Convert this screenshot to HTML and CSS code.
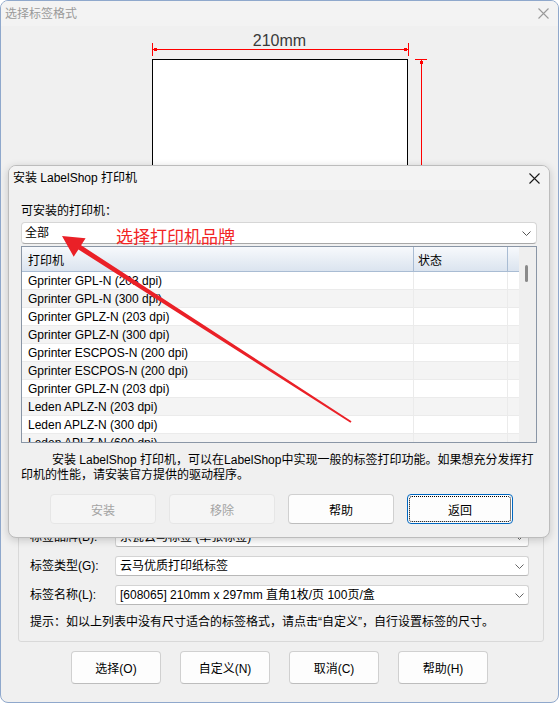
FILE: index.html
```html
<!DOCTYPE html>
<html lang="zh-CN">
<head>
<meta charset="utf-8">
<title>选择标签格式</title>
<link rel="stylesheet" href="styles.css">
</head>
<body>
<div class="win">
  <div class="titlebar">
    <span class="title inactive">选择标签格式</span>
    <svg class="xbtn" width="11" height="11" viewBox="0 0 11 11"><path d="M0.5 0.5L10.5 10.5M10.5 0.5L0.5 10.5" stroke="#9a9a9a" stroke-width="1.1" fill="none"/></svg>
  </div>
  <div class="preview">
    <svg width="557" height="493" viewBox="1 26 557 493">
      <text x="279.5" y="46" text-anchor="middle" class="dimtext">210mm</text>
      <line x1="152" y1="49.5" x2="409" y2="49.5" stroke="#ff0000" stroke-width="1"/>
      <line x1="152.5" y1="43" x2="152.5" y2="56" stroke="#ff0000" stroke-width="1"/>
      <line x1="408.5" y1="43" x2="408.5" y2="56" stroke="#ff0000" stroke-width="1"/>
      <rect x="154" y="48" width="3" height="3" fill="#ff0000"/>
      <rect x="404" y="48" width="3" height="3" fill="#ff0000"/>
      <rect x="152.5" y="59.5" width="255" height="600" fill="#ffffff" stroke="#000000" stroke-width="1"/>
      <line x1="415" y1="59.5" x2="427" y2="59.5" stroke="#ff0000" stroke-width="1"/>
      <line x1="421.5" y1="59" x2="421.5" y2="519" stroke="#ff0000" stroke-width="1"/>
      <rect x="420" y="61" width="3" height="3" fill="#ff0000"/>
    </svg>
  </div>
  <div class="group">
    <div class="row"><span class="lbl">标签品牌(B):</span><div class="combo">京瓷云马标签 (单张标签)<svg class="chev" width="9" height="5" viewBox="0 0 9 5"><polyline points="0.5,0.5 4.5,4.5 8.5,0.5" fill="none" stroke="#666" stroke-width="1"/></svg></div></div>
    <div class="row"><span class="lbl">标签类型(G):</span><div class="combo">云马优质打印纸标签<svg class="chev" width="9" height="5" viewBox="0 0 9 5"><polyline points="0.5,0.5 4.5,4.5 8.5,0.5" fill="none" stroke="#666" stroke-width="1"/></svg></div></div>
    <div class="row"><span class="lbl">标签名称(L):</span><div class="combo">[608065] 210mm x 297mm 直角1枚/页 100页/盒<svg class="chev" width="9" height="5" viewBox="0 0 9 5"><polyline points="0.5,0.5 4.5,4.5 8.5,0.5" fill="none" stroke="#666" stroke-width="1"/></svg></div></div>
    <div class="hint">提示：如以上列表中没有尺寸适合的标签格式，请点击“自定义”，自行设置标签的尺寸。</div>
  </div>
  <div class="btns">
    <button class="btn">选择(O)</button>
    <button class="btn">自定义(N)</button>
    <button class="btn">取消(C)</button>
    <button class="btn">帮助(H)</button>
  </div>
</div>

<div class="dlg">
  <div class="dtitlebar">
    <span class="title">安装 LabelShop 打印机</span>
    <svg class="dxbtn" width="11" height="11" viewBox="0 0 11 11"><path d="M0.5 0.5L10.5 10.5M10.5 0.5L0.5 10.5" stroke="#1a1a1a" stroke-width="1.1" fill="none"/></svg>
  </div>
  <div class="dbody">
    <div class="dlabel">可安装的打印机：</div>
    <div class="dcombo">全部<svg class="chev" width="9" height="5" viewBox="0 0 9 5"><polyline points="0.5,0.5 4.5,4.5 8.5,0.5" fill="none" stroke="#555" stroke-width="1"/></svg></div>
    <div class="list">
      <div class="grid">
        <div class="lhead">
          <div class="c1">打印机</div><div class="c2">状态</div><div class="c3"></div>
        </div>
        <div class="lrow"><div class="c1">Gprinter GPL-N (203 dpi)</div><div class="c2"></div><div class="c3"></div></div>
        <div class="lrow alt"><div class="c1">Gprinter GPL-N (300 dpi)</div><div class="c2"></div><div class="c3"></div></div>
        <div class="lrow"><div class="c1">Gprinter GPLZ-N (203 dpi)</div><div class="c2"></div><div class="c3"></div></div>
        <div class="lrow alt"><div class="c1">Gprinter GPLZ-N (300 dpi)</div><div class="c2"></div><div class="c3"></div></div>
        <div class="lrow"><div class="c1">Gprinter ESCPOS-N (200 dpi)</div><div class="c2"></div><div class="c3"></div></div>
        <div class="lrow alt"><div class="c1">Gprinter ESCPOS-N (200 dpi)</div><div class="c2"></div><div class="c3"></div></div>
        <div class="lrow"><div class="c1">Gprinter GPLZ-N (203 dpi)</div><div class="c2"></div><div class="c3"></div></div>
        <div class="lrow alt"><div class="c1">Leden APLZ-N (203 dpi)</div><div class="c2"></div><div class="c3"></div></div>
        <div class="lrow"><div class="c1">Leden APLZ-N (300 dpi)</div><div class="c2"></div><div class="c3"></div></div>
        <div class="lrow alt"><div class="c1">Leden APLZ-N (600 dpi)</div><div class="c2"></div><div class="c3"></div></div>
      </div>
      <div class="sb"><div class="thumb"></div></div>
    </div>
    <p class="desc">安装 LabelShop 打印机，可以在LabelShop中实现一般的标签打印功能。如果想充分发挥打<br>印机的性能，请安装官方提供的驱动程序。</p>
    <div class="dbtns">
      <button class="dbtn disabled">安装</button>
      <button class="dbtn disabled">移除</button>
      <button class="dbtn">帮助</button>
      <button class="dbtn focus">返回</button>
    </div>
  </div>
</div>

<svg class="arrow" width="559" height="703" viewBox="0 0 559 703">
  <polygon points="62,236 85.6,238.2 81.1,245.3 351.5,421.2 350.5,422.8 78.4,249.5 73.7,256.7" fill="#ea2027"/>
</svg>
<div class="note">选择打印机品牌</div>
</body>
</html>
```

FILE: styles.css
```css
* { box-sizing: border-box; }
html, body { margin: 0; padding: 0; }
body {
  width: 559px;
  height: 703px;
  position: relative;
  overflow: hidden;
  background: #ffffff;
  font-family: "Liberation Sans", "Noto Sans CJK SC", sans-serif;
  font-size: 12px;
  color: #000;
}

.win {
  width: 559px;
  height: 703px;
  border: 1px solid #8fa8cc;
  border-radius: 8px;
  background: #f0f0f0;
  display: flex;
  flex-direction: column;
  overflow: hidden;
}

.titlebar {
  height: 25px;
  flex: none;
  background: #f3f3f3;
  display: flex;
  align-items: center;
  padding-left: 4px;
  padding-right: 9px;
}
.title { flex: 1; line-height: 16px; }
.title.inactive { color: #9a9a9a; }
.xbtn, .dxbtn { flex: none; }

.preview { height: 493px; flex: none; }
.preview svg { display: block; }
.dimtext {
  font-family: "Liberation Sans", sans-serif;
  font-size: 16px;
  fill: #3a3a3a;
}

.group {
  margin: 0 14px 0 17px;
  border: 1px solid #d9d9d9;
  border-radius: 3px;
  padding: 7px 14px 11px 11px;
  display: flex;
  flex-direction: column;
  gap: 9px;
}
.row { display: flex; align-items: center; height: 20px; }
.lbl { width: 85px; flex: none; line-height: 16px; }
.combo {
  flex: 1;
  height: 20px;
  background: #fff;
  border: 1px solid #d4d4d4;
  border-bottom-color: #b8b8b8;
  border-radius: 3px;
  display: flex;
  align-items: center;
  padding-left: 4px;
  padding-right: 4px;
  line-height: 16px;
  white-space: nowrap;
}
.chev { margin-left: auto; flex: none; }
.hint { line-height: 16px; height: 16px; white-space: nowrap; }

.btns {
  margin-top: 9px;
  display: flex;
  justify-content: center;
  gap: 19px;
}
.btn, .dbtn {
  font: inherit;
  color: #000;
  background: #fdfdfd;
  border: 1px solid #d0d0d0;
  border-bottom-color: #bdbdbd;
  border-radius: 4px;
  padding: 0;
  margin: 0;
}
.btn { width: 90px; height: 33px; }

/* front dialog */
.dlg {
  position: absolute;
  left: 8px;
  top: 165px;
  width: 542px;
  height: 373px;
  background: #f0f0f0;
  border: 1px solid #bcbcbc;
  border-radius: 8px;
  box-shadow: 0 2px 8px rgba(0,0,0,0.18);
  overflow: hidden;
}
.dtitlebar {
  height: 24px;
  background: #f3f3f3;
  display: flex;
  align-items: center;
  padding-left: 4px;
  padding-right: 9px;
}
.dbody { padding: 0 12px 0 12px; }
.dlabel { margin-top: 13px; line-height: 16px; height: 16px; }
.dcombo {
  margin-top: 3px;
  height: 22px;
  width: 516px;
  background: #fff;
  border: 1px solid #d6d6d6;
  border-bottom-color: #a8a8a8;
  border-radius: 4px;
  display: flex;
  align-items: center;
  padding-left: 3px;
  padding-right: 5px;
  line-height: 16px;
}
.list {
  margin-top: 2px;
  width: 516px;
  height: 197px;
  border: 1px solid #8a96a6;
  display: flex;
  background: #fff;
}
.grid { width: 497px; flex: none; overflow: hidden; }
.lhead {
  height: 25px;
  display: flex;
  background: linear-gradient(#f7f9fc, #dbe4ef);
  border-bottom: 1px solid #a9bcd3;
}
.lhead > div { display: flex; align-items: center; }
.c1 { width: 392px; flex: none; padding-left: 6px; border-right: 1px solid #ebebeb; white-space: nowrap; }
.c2 { width: 94px; flex: none; padding-left: 4px; border-right: 1px solid #ebebeb; }
.c3 { flex: 1; }
.lhead .c1, .lhead .c2 { border-right-color: #a9bcd3; }
.lrow {
  height: 18px;
  display: flex;
  background: #fff;
  border-bottom: 1px solid #ebebeb;
  line-height: 16px;
}
.lrow.alt { background: #f4f4f4; }
.lrow > div { display: flex; align-items: center; }
.sb {
  flex: 1;
  background: #efefef;
  position: relative;
}
.thumb {
  position: absolute;
  left: 6px;
  top: 18px;
  width: 3px;
  height: 17px;
  border-radius: 2px;
  background: #8a8a8a;
}
.desc {
  margin: 10px 0 0 0;
  line-height: 15px;
  text-indent: 31px;
  white-space: nowrap;
}
.dbtns {
  margin-top: 11px;
  margin-left: 29px;
  display: flex;
  gap: 13px;
}
.dbtn { width: 106px; height: 30px; position: relative; }
.dbtn.disabled {
  background: #f5f5f5;
  border-color: #e6e6e6;
  color: #a3a3a3;
}
.dbtn.focus { border-color: #0067c0; }
.dbtn.focus::after {
  content: "";
  position: absolute;
  inset: 1px;
  border: 1px dotted #000;
  border-radius: 3px;
}

/* annotation overlay */
.arrow {
  position: absolute;
  left: 0;
  top: 0;
  pointer-events: none;
}
.note {
  position: absolute;
  left: 116px;
  top: 226px;
  font-family: "Noto Sans CJK SC", sans-serif;
  font-size: 17px;
  line-height: 20px;
  color: #f22424;
  white-space: nowrap;
}
```
